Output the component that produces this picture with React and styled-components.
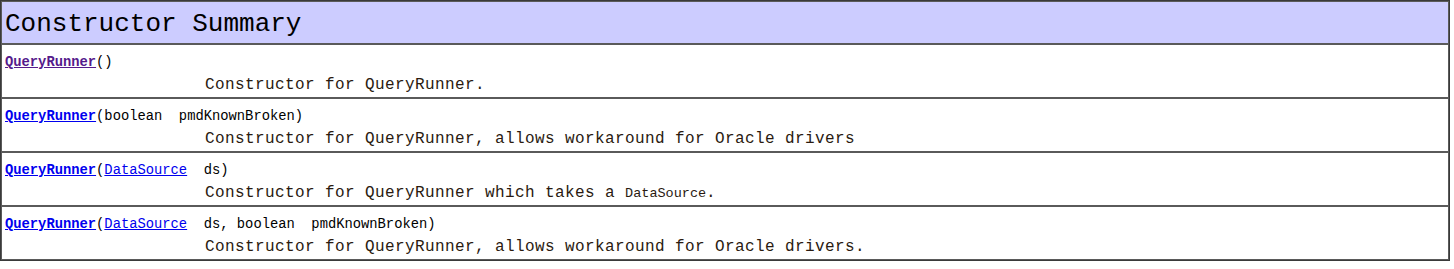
import React from "react";
import styled, { createGlobalStyle } from "styled-components";

const Global = createGlobalStyle`
  html, body { margin: 0; padding: 0; background: #fff; }
  body { font-family: "Liberation Mono", "DejaVu Sans Mono", monospace; }
`;

const Table = styled.table`
  width: 1450px;
  border: 1px solid #3a3a3a;
  border-spacing: 0;
  border-collapse: separate;
  box-sizing: border-box;
`;

const HeadCell = styled.th`
  background: #ccccff;
  border: 1px solid #5a5a5a;
  height: 41px;
  box-sizing: content-box;
  padding: 2px 0 0 3px;
  height: 39px;
  text-align: left;
  font-family: "Liberation Mono", monospace;
  font-weight: normal;
  font-size: 26px;
  color: #000;
  vertical-align: middle;
`;

const Cell = styled.td`
  border: 1px solid #5a5a5a;
  height: 52px;
  padding: 0 0 0 3px;
  box-sizing: content-box;
  vertical-align: top;
`;

const CodeLine = styled.div`
  font-family: "Liberation Mono", monospace;
  font-size: 13.8px;
  line-height: 20px;
  padding-top: 8px;
  color: #000;
  white-space: pre;
`;

const Link = styled.a`
  color: ${(p) => (p.$visited ? "#551a8b" : "#0000ee")};
  font-weight: ${(p) => (p.$bold ? "bold" : "normal")};
  text-decoration: underline;
  cursor: pointer;
`;

const Desc = styled.div`
  font-family: "Liberation Mono", monospace;
  font-size: 16px;
  letter-spacing: 0.4px;
  line-height: 22px;
  padding-left: 200px;
  padding-top: 1px;
  color: #2a1a10;
  white-space: pre;
`;

const InlineCode = styled.code`
  font-family: "Liberation Mono", monospace;
  font-size: 13.5px;
  letter-spacing: 0;
`;

const rows = [
  {
    visited: true,
    params: [],
    desc: ["Constructor for QueryRunner."],
  },
  {
    params: [{ text: "boolean  pmdKnownBroken" }],
    desc: ["Constructor for QueryRunner, allows workaround for Oracle drivers"],
  },
  {
    params: [{ link: "DataSource" }, { text: "  ds" }],
    desc: ["Constructor for QueryRunner which takes a ", { code: "DataSource" }, "."],
  },
  {
    params: [{ link: "DataSource" }, { text: "  ds, boolean  pmdKnownBroken" }],
    desc: ["Constructor for QueryRunner, allows workaround for Oracle drivers."],
  },
];

export default function App() {
  return (
    <>
      <Global />
      <Table>
        <thead>
          <tr>
            <HeadCell>Constructor Summary</HeadCell>
          </tr>
        </thead>
        <tbody>
          {rows.map((r, i) => (
            <tr key={i}>
              <Cell>
                <CodeLine>
                  <Link $bold $visited={r.visited}>QueryRunner</Link>
                  (
                  {r.params.map((p, j) =>
                    p.link ? <Link key={j}>{p.link}</Link> : <span key={j}>{p.text}</span>
                  )}
                  )
                </CodeLine>
                <Desc>
                  {r.desc.map((d, j) =>
                    typeof d === "string" ? <span key={j}>{d}</span> : <InlineCode key={j}>{d.code}</InlineCode>
                  )}
                </Desc>
              </Cell>
            </tr>
          ))}
        </tbody>
      </Table>
    </>
  );
}
